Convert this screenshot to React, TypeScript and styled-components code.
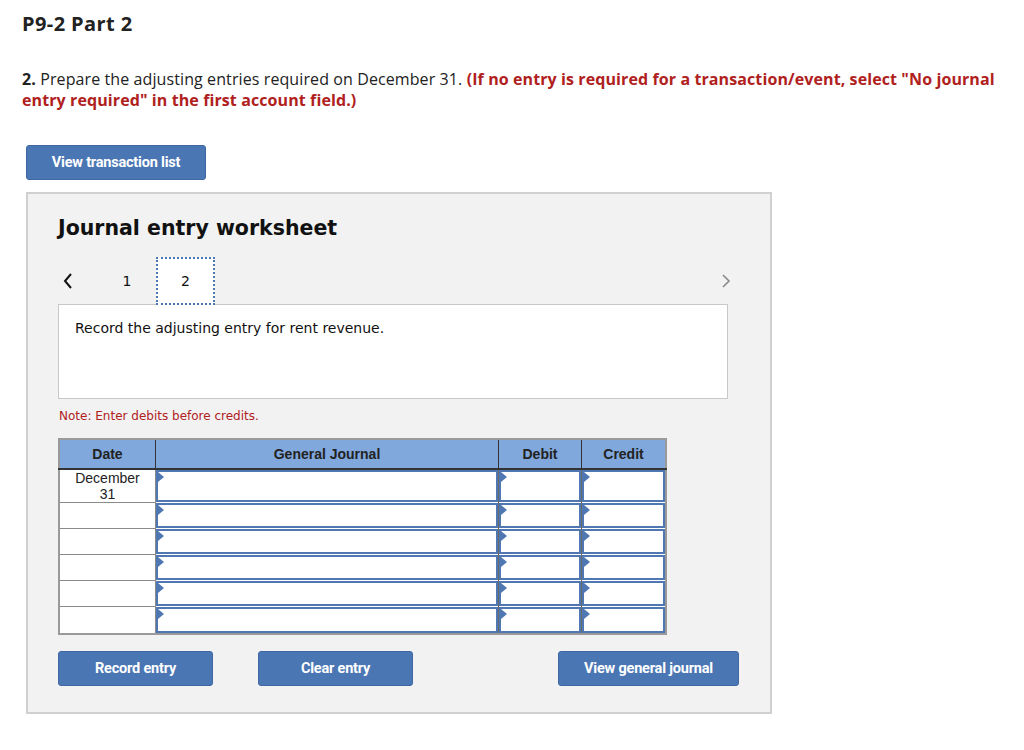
import React from 'react'
import styled, { createGlobalStyle } from 'styled-components';

const GlobalStyle = createGlobalStyle`
  body {
    margin: 0;
    background: #ffffff;
    font-family: "Open Sans", Arial, sans-serif;
  }
`;

const Page = styled.div`
  padding: 11px 14px 0 22px;
  width: 1024px;
  box-sizing: border-box;
`;

const Title = styled.h1`
  margin: 0;
  font-family: "Open Sans", Arial, sans-serif;
  font-size: 20px;
  font-weight: bold;
  color: #222;
  line-height: 26px;
  letter-spacing: 0.4px;
`;

const Question = styled.p`
  margin: 32px 0 0 0;
  font-family: "Open Sans", Arial, sans-serif;
  font-size: 16px;
  line-height: 21px;
  color: #222;
  letter-spacing: 0.1px;
`;

const Red = styled.strong`
  color: #b0211d;
`;

const Button = styled.button<{ $width: number }>`
  width: ${p => p.$width}px;
  height: 35px;
  background: #4a76b4;
  color: #fff;
  border: 1px solid #3f68a3;
  border-radius: 3px;
  font-family: Roboto, sans-serif;
  font-weight: bold;
  font-size: 14.5px;
  letter-spacing: -0.2px;
  cursor: pointer;
  padding: 0;
`;

const TopBar = styled.div`
  margin: 34px 0 0 4px;
`;

const Panel = styled.div`
  margin: 12px 0 0 4px;
  width: 746px;
  box-sizing: border-box;
  background: #f2f2f2;
  border: 2px solid #d0d0d0;
  padding: 20px 42px 26px 30px;
`;

const PanelTitle = styled.h2`
  margin: 0;
  font-family: "DejaVu Sans", Verdana, sans-serif;
  font-size: 20.5px;
  font-weight: bold;
  color: #111;
  line-height: 28px;
`;

const Nav = styled.div`
  display: flex;
  align-items: center;
  margin-top: 15px;
  height: 48px;
  position: relative;
  z-index: 1;
`;

const Arrow = styled.button<{ $muted?: boolean }>`
  background: none;
  border: none;
  padding: 0;
  width: 20px;
  height: 20px;
  display: flex;
  align-items: center;
  justify-content: center;
  color: ${p => (p.$muted ? '#8a8a8a' : '#111')};
  margin-left: ${p => (p.$muted ? 'auto' : '0')};
  margin-right: ${p => (p.$muted ? '-8px' : '0')};
`;

const Tab = styled.div<{ $active?: boolean }>`
  width: ${p => (p.$active ? '59px' : '52px')};
  height: 48px;
  box-sizing: border-box;
  display: flex;
  align-items: center;
  justify-content: center;
  font-family: "DejaVu Sans", Verdana, sans-serif;
  font-size: 14px;
  color: #111;
  background: ${p => (p.$active ? '#fff' : 'transparent')};
  border: ${p => (p.$active ? '2px dotted #4a76b4' : 'none')};
  margin-left: ${p => (p.$active ? '3px' : '23px')};
`;

const Prompt = styled.div`
  margin-top: -1px;
  height: 95px;
  box-sizing: border-box;
  background: #fff;
  border: 1px solid #c8c8c8;
  padding: 15px 16px;
  font-family: "DejaVu Sans", Verdana, sans-serif;
  font-size: 14px;
  color: #111;
`;

const Note = styled.p`
  margin: 10px 0 0 1px;
  font-family: "DejaVu Sans", Verdana, sans-serif;
  font-size: 12px;
  color: #b0211d;
`;

const Table = styled.table`
  margin-top: 15px;
  border-collapse: collapse;
  border: 2px solid #9a9a9a;
  font-family: "Liberation Sans", Arial, sans-serif;
`;

const Th = styled.th<{ $w: number }>`
  width: ${p => p.$w}px;
  height: 28px;
  padding: 0;
  background: #80a8dc;
  font-size: 14px;
  font-weight: bold;
  color: #222;
  border-left: 1px solid #333;
  border-bottom: 2px solid #333;
  &:first-child {
    border-left: none;
  }
`;

const Td = styled.td<{ $h: number }>`
  height: ${p => p.$h - 1}px;
  padding: 0;
  background: #fff;
  border: 1px solid #8a8a8a;
  font-size: 14px;
  color: #222;
  text-align: center;
  line-height: 16px;
  vertical-align: middle;
`;

const FieldTd = styled.td`
  padding: 0;
  background: #fff;
  border-left: 1px solid #6a6a6a;
  border-top: none;
  border-bottom: none;
`;

const Field = styled.div<{ $h: number }>`
  position: relative;
  height: ${p => p.$h - 1}px;
  box-sizing: border-box;
  border: 2px solid #4f78b3;
  background: #fff;
  &::before {
    content: '';
    position: absolute;
    left: 0;
    top: 0;
    border-top: 5px solid transparent;
    border-bottom: 5px solid transparent;
    border-left: 6px solid #4f78b3;
  }
`;

const Actions = styled.div`
  display: flex;
  margin: 16px -11px 0 0;
`;

const Gap = styled.div<{ $w?: number }>`
  flex: ${p => (p.$w ? `0 0 ${p.$w}px` : '1')};
`;

const rows = [33, 26, 26, 26, 26, 27];

export default function App() {
  return (
    <>
      <GlobalStyle />
      <Page>
        <Title>P9-2 Part 2</Title>
        <Question>
          <strong>2.</strong> Prepare the adjusting entries required on December 31.{' '}
          <Red>
            (If no entry is required for a transaction/event, select "No journal entry required" in the first
            account field.)
          </Red>
        </Question>
        <TopBar>
          <Button $width={180}>View transaction list</Button>
        </TopBar>
        <Panel>
          <PanelTitle>Journal entry worksheet</PanelTitle>
          <Nav>
            <Arrow>
              <svg width="12" height="18" viewBox="0 0 12 18">
                <path d="M9 2 L3 9 L9 16" fill="none" stroke="currentColor" strokeWidth="2" />
              </svg>
            </Arrow>
            <Tab>1</Tab>
            <Tab $active>2</Tab>
            <Arrow $muted>
              <svg width="12" height="18" viewBox="0 0 12 18">
                <path d="M3 3 L9 9 L3 15" fill="none" stroke="currentColor" strokeWidth="1.6" />
              </svg>
            </Arrow>
          </Nav>
          <Prompt>Record the adjusting entry for rent revenue.</Prompt>
          <Note>Note: Enter debits before credits.</Note>
          <Table>
            <thead>
              <tr>
                <Th $w={95}>Date</Th>
                <Th $w={342}>General Journal</Th>
                <Th $w={82}>Debit</Th>
                <Th $w={83}>Credit</Th>
              </tr>
            </thead>
            <tbody>
              {rows.map((h, i) => (
                <tr key={i}>
                  <Td $h={h}>
                    {i === 0 ? (
                      <>
                        December
                        <br />
                        31
                      </>
                    ) : null}
                  </Td>
                  <FieldTd>
                    <Field $h={h} />
                  </FieldTd>
                  <FieldTd>
                    <Field $h={h} />
                  </FieldTd>
                  <FieldTd>
                    <Field $h={h} />
                  </FieldTd>
                </tr>
              ))}
            </tbody>
          </Table>
          <Actions>
            <Button $width={155}>Record entry</Button>
            <Gap $w={45} />
            <Button $width={155}>Clear entry</Button>
            <Gap />
            <Button $width={181}>View general journal</Button>
          </Actions>
        </Panel>
      </Page>
    </>
  );
}
